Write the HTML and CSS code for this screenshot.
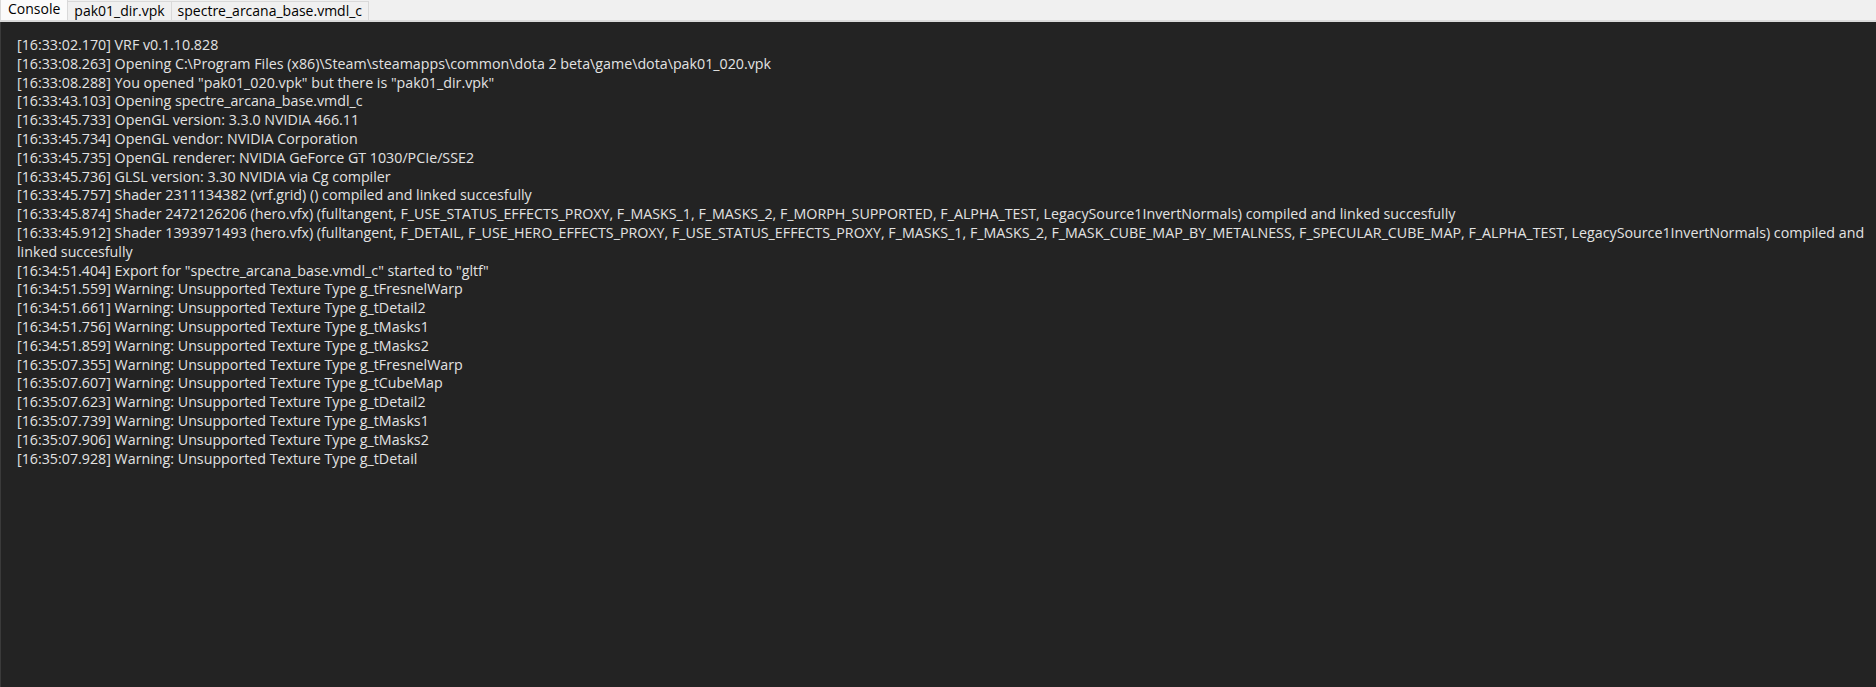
FILE: index.html
```html
<!DOCTYPE html>
<html>
<head>
<meta charset="utf-8">
<link rel="stylesheet" href="styles.css">
</head>
<body>
<div class="window">
  <div class="tabs">
    <div class="tab active">Console</div>
    <div class="tab">pak01_dir.vpk</div>
    <div class="tab">spectre_arcana_base.vmdl_c</div>
  </div>
  <div class="console">
    <div class="line">[16:33:02.170] VRF v0.1.10.828</div>
    <div class="line">[16:33:08.263] Opening C:\Program Files (x86)\Steam\steamapps\common\dota 2 beta\game\dota\pak01_020.vpk</div>
    <div class="line">[16:33:08.288] You opened "pak01_020.vpk" but there is "pak01_dir.vpk"</div>
    <div class="line">[16:33:43.103] Opening spectre_arcana_base.vmdl_c</div>
    <div class="line">[16:33:45.733] OpenGL version: 3.3.0 NVIDIA 466.11</div>
    <div class="line">[16:33:45.734] OpenGL vendor: NVIDIA Corporation</div>
    <div class="line">[16:33:45.735] OpenGL renderer: NVIDIA GeForce GT 1030/PCIe/SSE2</div>
    <div class="line">[16:33:45.736] GLSL version: 3.30 NVIDIA via Cg compiler</div>
    <div class="line">[16:33:45.757] Shader 2311134382 (vrf.grid) () compiled and linked succesfully</div>
    <div class="line">[16:33:45.874] Shader 2472126206 (hero.vfx) (fulltangent, F_USE_STATUS_EFFECTS_PROXY, F_MASKS_1, F_MASKS_2, F_MORPH_SUPPORTED, F_ALPHA_TEST, LegacySource1InvertNormals) compiled and linked succesfully</div>
    <div class="line">[16:33:45.912] Shader 1393971493 (hero.vfx) (fulltangent, F_DETAIL, F_USE_HERO_EFFECTS_PROXY, F_USE_STATUS_EFFECTS_PROXY, F_MASKS_1, F_MASKS_2, F_MASK_CUBE_MAP_BY_METALNESS, F_SPECULAR_CUBE_MAP, F_ALPHA_TEST, LegacySource1InvertNormals) compiled and linked succesfully</div>
    <div class="line">[16:34:51.404] Export for "spectre_arcana_base.vmdl_c" started to "gltf"</div>
    <div class="line">[16:34:51.559] Warning: Unsupported Texture Type g_tFresnelWarp</div>
    <div class="line">[16:34:51.661] Warning: Unsupported Texture Type g_tDetail2</div>
    <div class="line">[16:34:51.756] Warning: Unsupported Texture Type g_tMasks1</div>
    <div class="line">[16:34:51.859] Warning: Unsupported Texture Type g_tMasks2</div>
    <div class="line">[16:35:07.355] Warning: Unsupported Texture Type g_tFresnelWarp</div>
    <div class="line">[16:35:07.607] Warning: Unsupported Texture Type g_tCubeMap</div>
    <div class="line">[16:35:07.623] Warning: Unsupported Texture Type g_tDetail2</div>
    <div class="line">[16:35:07.739] Warning: Unsupported Texture Type g_tMasks1</div>
    <div class="line">[16:35:07.906] Warning: Unsupported Texture Type g_tMasks2</div>
    <div class="line">[16:35:07.928] Warning: Unsupported Texture Type g_tDetail</div>
  </div>
</div>
</body>
</html>
```

FILE: styles.css
```css
html, body {
  margin: 0;
  padding: 0;
  height: 100%;
  background: #f0f0f0;
}
.window {
  display: flex;
  flex-direction: column;
  height: 100%;
  font-family: "Open Sans", "Noto Sans", sans-serif;
}
.tabs {
  display: flex;
  align-items: flex-end;
  height: 20px;
  background: #f0f0f0;
  border-bottom: 2px solid #dadada;
  font-size: 14px;
}
.tab {
  height: 18px;
  line-height: 18px;
  padding: 0 6px;
  background: #f0f0f0;
  border: 1px solid #d9d9d9;
  border-bottom: none;
  margin-left: -1px;
  color: #000;
  white-space: nowrap;
}
.tab.active {
  height: 20px;
  line-height: 18px;
  background: #fbfbfb;
  margin-left: 0;
  padding: 0 7px;
  z-index: 1;
}
.console {
  flex: 1;
  background: #232323;
  border-left: 1px solid #3a3a3a;
  padding: 14px 3px 0 16px;
  color: #e2e2e2;
  font-size: 14.25px;
  line-height: 18.8px;
}
.line {
  white-space: normal;
}
```
